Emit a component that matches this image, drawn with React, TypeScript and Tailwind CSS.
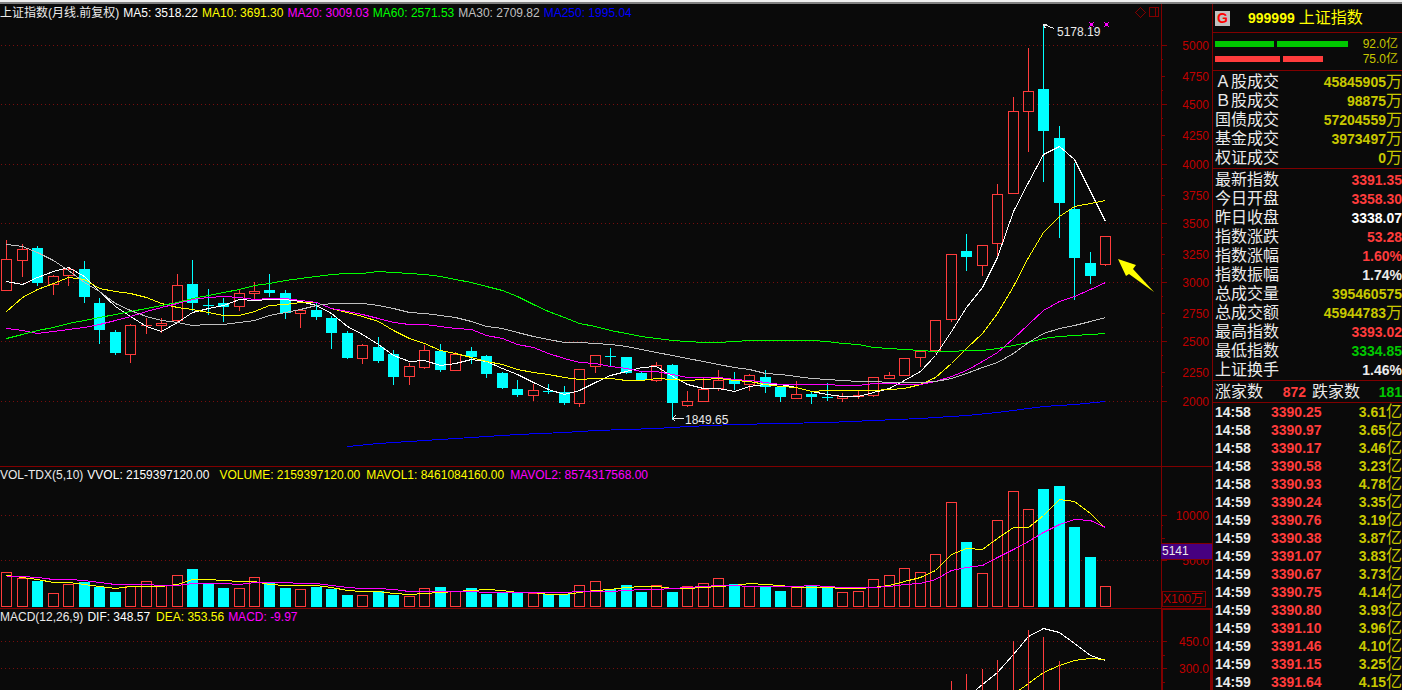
import { ReactNode } from "react";

// r = rising month (hollow), c = falling month (filled)
type TCandle = ["r" | "c", number, number, number, number, number];

// direction, high, body top, body bottom, low, volume top
const Candles: TCandle[] = [
  ["r", 240, 259, 290, 290, 572],
  ["r", 244, 249, 260, 276, 578],
  ["c", 246, 248, 282, 285, 581],
  ["r", 275, 276, 284, 294, 593],
  ["r", 267, 269, 275, 285, 584],
  ["c", 261, 269, 296, 302, 582],
  ["c", 298, 303, 329, 343, 587],
  ["c", 330, 332, 352, 354, 592],
  ["r", 324, 325, 354, 362, 586],
  ["r", 318, 325, 325, 333, 581],
  ["r", 318, 323, 325, 332, 585],
  ["r", 274, 285, 320, 321, 575],
  ["c", 260, 284, 302, 310, 569],
  ["c", 289, 305, 305, 314, 584],
  ["c", 298, 303, 306, 321, 588],
  ["r", 289, 293, 306, 310, 588],
  ["r", 282, 291, 293, 299, 577],
  ["c", 274, 290, 292, 296, 583],
  ["c", 290, 293, 312, 318, 588],
  ["r", 310, 310, 313, 327, 589],
  ["c", 303, 310, 316, 319, 587],
  ["c", 316, 318, 332, 348, 589],
  ["c", 331, 333, 357, 358, 595],
  ["r", 344, 345, 358, 363, 595],
  ["c", 337, 347, 360, 362, 591],
  ["c", 350, 354, 376, 384, 595],
  ["r", 363, 366, 376, 384, 596],
  ["r", 345, 350, 367, 368, 588],
  ["c", 344, 351, 369, 371, 587],
  ["r", 352, 354, 370, 370, 591],
  ["c", 347, 351, 356, 363, 588],
  ["c", 355, 356, 373, 377, 594],
  ["c", 372, 373, 387, 388, 593],
  ["c", 380, 389, 394, 396, 593],
  ["r", 384, 390, 395, 400, 593],
  ["c", 384, 391, 391, 393, 594],
  ["c", 386, 392, 402, 404, 594],
  ["r", 369, 369, 403, 406, 585],
  ["r", 355, 355, 366, 372, 581],
  ["c", 348, 356, 356, 365, 589],
  ["c", 357, 357, 372, 373, 585],
  ["c", 371, 373, 379, 379, 592],
  ["r", 362, 365, 380, 381, 585],
  ["c", 364, 365, 402, 419, 592],
  ["r", 391, 401, 405, 406, 586],
  ["r", 377, 389, 401, 401, 583],
  ["r", 370, 380, 388, 390, 578],
  ["c", 372, 380, 383, 389, 584],
  ["r", 374, 375, 384, 390, 586],
  ["c", 370, 377, 386, 392, 586],
  ["c", 386, 387, 396, 401, 591],
  ["r", 381, 394, 398, 398, 586],
  ["c", 391, 394, 396, 403, 585],
  ["c", 383, 397, 397, 400, 587],
  ["r", 393, 396, 398, 401, 592],
  ["r", 391, 395, 396, 398, 591],
  ["r", 377, 377, 395, 396, 579],
  ["r", 372, 375, 378, 378, 575],
  ["r", 358, 358, 375, 375, 568],
  ["r", 350, 351, 357, 366, 572],
  ["r", 320, 320, 350, 352, 554],
  ["r", 254, 254, 319, 321, 502],
  ["c", 234, 251, 256, 270, 542],
  ["r", 245, 245, 265, 275, 573],
  ["r", 184, 194, 243, 258, 520],
  ["r", 97, 111, 193, 193, 491],
  ["r", 48, 91, 111, 151, 509],
  ["c", 24, 89, 130, 181, 489],
  ["c", 126, 138, 202, 237, 486],
  ["c", 163, 209, 257, 299, 527],
  ["c", 252, 263, 275, 283, 557],
  ["r", 236, 236, 264, 265, 586],
];

const MA5 = [
  281, 284, 277, 271, 267, 276, 291, 306, 316, 326, 331, 322, 312, 308, 305, 299, 300, 299, 299, 301, 305, 313, 326, 334,
  344, 355, 361, 360, 365, 363, 359, 361, 368, 374, 382, 389, 394, 390, 382, 375, 371, 367, 366, 376, 384, 388, 388, 391,
  386, 384, 384, 387, 391, 394, 396, 396, 392, 388, 380, 371, 355, 331, 307, 287, 257, 211, 182, 154, 146, 159, 191, 221,
];

const MA10 = [
  311, 297, 289, 283, 277, 279, 288, 291, 293, 297, 303, 307, 309, 312, 315, 315, 311, 305, 304, 302, 302, 308, 312, 316,
  321, 330, 338, 343, 350, 353, 357, 361, 364, 369, 372, 374, 377, 379, 378, 378, 380, 380, 378, 379, 380, 379, 378, 380,
  381, 384, 386, 387, 391, 390, 390, 390, 390, 389, 388, 384, 377, 363, 348, 333, 313, 286, 257, 232, 216, 206, 203, 200,
];

const MA20 = [
  328, 330, 333, 331, 329, 327, 324, 320, 316, 311, 307, 303, 299, 297, 296, 297, 299, 298, 298, 300, 302, 308, 311, 314,
  318, 322, 324, 324, 326, 328, 329, 335, 338, 344, 347, 353, 358, 362, 363, 366, 368, 371, 371, 374, 377, 377, 377, 379,
  380, 382, 384, 384, 384, 384, 385, 385, 383, 383, 384, 384, 381, 376, 370, 361, 352, 338, 324, 310, 301, 296, 289, 282,
];

const MA30 = [
  244, 246, 252, 260, 270, 282, 291, 303, 310, 316, 320, 322, 325, 324, 324, 322, 320, 315, 312, 309, 305, 303, 303, 303,
  305, 308, 312, 313, 315, 317, 321, 326, 328, 332, 336, 339, 342, 342, 343, 344, 346, 349, 352, 355, 358, 361, 364, 367,
  369, 373, 374, 376, 378, 379, 380, 381, 381, 382, 382, 382, 381, 378, 373, 367, 362, 353, 342, 333, 328, 325, 321, 317,
];

const MA60 = [
  338, 334, 330, 327, 323, 320, 317, 314, 311, 308, 305, 302, 298, 295, 292, 289, 285, 283, 280, 278, 276, 274, 273, 273,
  271, 272, 273, 274, 276, 279, 282, 286, 290, 296, 304, 311, 317, 323, 326, 330, 333, 336, 338, 340, 341, 342, 342, 341,
  340, 340, 340, 340, 340, 341, 343, 344, 347, 348, 349, 350, 351, 351, 350, 350, 348, 345, 342, 338, 336, 335, 334, 333,
];

const MA250 =
  "347.5,446.5 378.5,443.5 424.5,440.5 471.5,437.5 517.5,434.5 564.5,432.5 595.5,430.5 656.5,428.5 687.5,426.5 734.5,424.5 780.5,423.5 827.5,422.5 873.5,420.5 920.5,418.5 966.5,415.5 997.5,412.5 1043.5,406.5 1074.5,404.5 1105.5,401.5";

const MAVOL1 = [
  575, 577, 579, 582, 582, 584, 586, 588, 586, 586, 586, 584, 579, 579, 580, 581, 581, 584, 585, 585, 585, 587, 590, 591,
  591, 593, 594, 593, 592, 591, 590, 589, 590, 592, 592, 594, 594, 592, 590, 589, 587, 586, 586, 588, 588, 587, 586, 585,
  583, 584, 585, 587, 587, 587, 588, 588, 587, 585, 581, 577, 570, 554, 548, 549, 538, 527, 527, 515, 499, 501, 513, 528,
];

const MAVOL2 = [
  576, 576, 577, 579, 579, 580, 582, 584, 584, 584, 585, 585, 583, 583, 583, 584, 582, 582, 582, 583, 583, 585, 587, 588,
  588, 589, 591, 591, 591, 591, 591, 592, 592, 592, 592, 592, 592, 591, 591, 591, 590, 589, 589, 588, 587, 586, 585, 585,
  586, 586, 586, 586, 585, 586, 587, 587, 587, 586, 584, 583, 579, 570, 567, 565, 557, 549, 541, 532, 524, 519, 520, 527,
];

const MacdBars = [681, 674, 669, 660, 641, 630, 637, 661];

const PriceLabels = [
  { text: "5000", y: 45 },
  { text: "4750", y: 76 },
  { text: "4500", y: 104 },
  { text: "4250", y: 135 },
  { text: "4000", y: 164 },
  { text: "3750", y: 195 },
  { text: "3500", y: 223 },
  { text: "3250", y: 254 },
  { text: "3000", y: 282 },
  { text: "2750", y: 313 },
  { text: "2500", y: 341 },
  { text: "2250", y: 372 },
  { text: "2000", y: 401 },
];

type TStat = { label: string; value: string; color: string };

const Turnover: TStat[] = [
  { label: "Ａ股成交", value: "45845905万", color: "text-[#c8c800]" },
  { label: "Ｂ股成交", value: "98875万", color: "text-[#c8c800]" },
  { label: "国债成交", value: "57204559万", color: "text-[#c8c800]" },
  { label: "基金成交", value: "3973497万", color: "text-[#c8c800]" },
  { label: "权证成交", value: "0万", color: "text-[#c8c800]" },
];

const IndexStats: TStat[] = [
  { label: "最新指数", value: "3391.35", color: "text-[#ff3c3c]" },
  { label: "今日开盘", value: "3358.30", color: "text-[#ff3c3c]" },
  { label: "昨日收盘", value: "3338.07", color: "text-white" },
  { label: "指数涨跌", value: "53.28", color: "text-[#ff3c3c]" },
  { label: "指数涨幅", value: "1.60%", color: "text-[#ff3c3c]" },
  { label: "指数振幅", value: "1.74%", color: "text-[#ebebeb]" },
  { label: "总成交量", value: "395460575", color: "text-[#c8c800]" },
  { label: "总成交额", value: "45944783万", color: "text-[#c8c800]" },
  { label: "最高指数", value: "3393.02", color: "text-[#ff3c3c]" },
  { label: "最低指数", value: "3334.85", color: "text-[#00c800]" },
  { label: "上证换手", value: "1.46%", color: "text-[#ebebeb]" },
];

const Ticks = [
  ["14:58", "3390.25", "3.61"],
  ["14:58", "3390.97", "3.65"],
  ["14:58", "3390.17", "3.46"],
  ["14:58", "3390.58", "3.23"],
  ["14:58", "3390.93", "4.78"],
  ["14:59", "3390.24", "3.35"],
  ["14:59", "3390.76", "3.19"],
  ["14:59", "3390.38", "3.87"],
  ["14:59", "3391.07", "3.83"],
  ["14:59", "3390.67", "3.73"],
  ["14:59", "3390.75", "4.14"],
  ["14:59", "3390.80", "3.93"],
  ["14:59", "3391.10", "3.96"],
  ["14:59", "3391.46", "4.10"],
  ["14:59", "3391.15", "3.25"],
  ["14:59", "3391.64", "4.15"],
];

const xAt = (i: number) => 6 + Math.floor(i * 15.48 + 0.8);

const Series = ({ values, color, from = 0 }: { values: number[]; color: string; from?: number }) => (
  <polyline points={values.map((y, i) => `${xAt(i + from) + 0.5},${y + 0.5}`).join(" ")} fill="none" stroke={color} />
);

const GridLine = ({ y }: { y: number }) => (
  <path d={`M1 ${y + 0.5}H1160`} stroke="#780e0e" strokeDasharray="1 3" />
);

const AxisTick = ({ y, size }: { y: number; size: number }) => (
  <path d={`M1162 ${y + 0.5}h${size}`} stroke="#800000" />
);

const AxisLabel = ({ y, children }: { y: number; children: ReactNode }) => (
  <text x="1209" y={y + 5} textAnchor="end" fill="#c00000">
    {children}
  </text>
);

const Box = ({ x, top, bottom, up }: { x: number; top: number; bottom: number; up: boolean }) => {
  if (top === bottom) {
    return <path d={`M${x - 5} ${top + 0.5}h11`} stroke={up ? "#ff3c3c" : "#00ffff"} />;
  }
  return up ? (
    <rect x={x - 4.5} y={top + 0.5} width="10" height={bottom - top} fill="none" stroke="#ff3c3c" />
  ) : (
    <rect x={x - 5} y={top} width="11" height={bottom - top + 1} fill="#00ffff" />
  );
};

const Panel = ({ viewBox, title, header, children }: { viewBox: string; title: string; header: ReactNode; children: ReactNode }) => (
  <section className="relative">
    <svg viewBox={viewBox} role="img" aria-label={title} className="block w-full text-xs" shapeRendering="crispEdges">
      {children}
    </svg>
    <div className="absolute top-0 left-0 flex h-[18px] items-center gap-1 text-xs whitespace-nowrap text-[#ebebeb]">
      {header}
    </div>
  </section>
);

function PriceChart() {
  return (
    <Panel
      viewBox="0 4 1212 462"
      title="上证指数"
      header={
        <>
          <h1>上证指数(月线.前复权)</h1>
          <span className="text-white">MA5: 3518.22</span>
          <span className="text-[#ffff00]">MA10: 3691.30</span>
          <span className="text-[#ff00ff]">MA20: 3009.03</span>
          <span className="text-[#00ff00]">MA60: 2571.53</span>
          <span className="text-[#c0c0c0]">MA30: 2709.82</span>
          <span className="text-[#0000ff]">MA250: 1995.04</span>
        </>
      }
    >
      {[45, 104, 164, 223, 282, 341, 401].map((y) => (
        <GridLine key={y} y={y} />
      ))}
      <path d="M1161.5 4V466" stroke="#800000" />
      {PriceLabels.map((item, i) => (
        <g key={item.text}>
          <AxisTick y={item.y} size={i % 2 === 0 ? 5 : 3} />
          {i < PriceLabels.length - 1 && <AxisTick y={item.y + 14} size={1} />}
          <AxisLabel y={item.y}>{item.text}</AxisLabel>
        </g>
      ))}

      {Candles.map(([dir, high, top, bottom, low], i) => {
        const x = xAt(i);
        const up = dir === "r";
        return (
          <g key={i}>
            <path
              d={`M${x + 0.5} ${high}V${top}M${x + 0.5} ${bottom}V${low + 1}`}
              stroke={up ? "#ff3c3c" : "#00ffff"}
            />
            <Box x={x} top={top} bottom={bottom} up={up} />
          </g>
        );
      })}

      <Series values={MA5} color="#ffffff" />
      <Series values={MA10} color="#ffff00" />
      <Series values={MA20} color="#ff00ff" />
      <Series values={MA60} color="#00ff00" />
      <Series values={MA30} color="#c0c0c0" />
      <polyline points={MA250} fill="none" stroke="#0000ff" />

      {/* highest and lowest price */}
      <path d="M1043.5 24.5l11 4M1043.5 24.5h3M1043.5 24.5l2 4" fill="none" stroke="#ebebeb" />
      <text x="1057" y="36" fill="#ebebeb">
        5178.19
      </text>
      <path d="M672.5 418.5h11M675.5 415.5l-3 3l3 3" fill="none" stroke="#ebebeb" />
      <text x="685" y="424" fill="#ebebeb">
        1849.65
      </text>

      <path d="M1089 22l5 5M1094 22l-5 5M1104 22l5 5M1109 22l-5 5" stroke="#ff00ff" />
      <path d="M1090 23h3v3h-3zM1105 23h3v3h-3z" fill="#ff00ff" />
      <path d="M1140.5 7.5l5 5l-5 5l-5 -5z" fill="none" stroke="#800000" />
      <path d="M1149.5 7.5h9v9h-9zM1155.5 7.5v9" fill="none" stroke="#800000" />

      <path
        d="M1118 259L1136 265L1133 269L1154 292L1147 287L1129 274L1126 276Z"
        fill="#ffff00"
        shapeRendering="geometricPrecision"
      />
    </Panel>
  );
}

function VolumeChart() {
  return (
    <Panel
      viewBox="0 466 1212 142"
      title="VOL-TDX"
      header={
        <>
          <h2>VOL-TDX(5,10)</h2>
          <span className="mr-1.5 text-white">VVOL: 2159397120.00</span>
          <span className="mr-0.5 text-[#ffff00]">VOLUME: 2159397120.00</span>
          <span className="mr-0.5 text-[#ffff00]">MAVOL1: 8461084160.00</span>
          <span className="text-[#ff00ff]">MAVOL2: 8574317568.00</span>
        </>
      }
    >
      <GridLine y={515} />
      <GridLine y={560} />
      <path d="M0 466.5H1212M1161.5 466V608" stroke="#800000" />
      <AxisTick y={515} size={5} />
      <AxisTick y={525} size={1} />
      <AxisTick y={538} size={3} />
      <AxisTick y={560} size={5} />
      <AxisLabel y={515}>10000</AxisLabel>
      <AxisLabel y={560}>5000</AxisLabel>

      {Candles.map((candle, i) => (
        <Box key={i} x={xAt(i)} top={candle[5]} bottom={606} up={candle[0] === "r"} />
      ))}
      <Series values={MAVOL1} color="#ffff00" />
      <Series values={MAVOL2} color="#ff00ff" />

      <rect x="1161" y="543" width="51" height="16" fill="#460080" />
      <path d="M1161 543.5H1212M1161 559.5H1212" stroke="#800000" />
      <text x="1162" y="555" fill="#ebebeb">
        5141
      </text>
      <rect x="1162.5" y="591.5" width="43" height="15" fill="none" stroke="#800000" />
      <text x="1163" y="603" fill="#c00000">
        X100万
      </text>
    </Panel>
  );
}

function MacdChart() {
  return (
    <Panel
      viewBox="0 608 1212 82"
      title="MACD"
      header={
        <>
          <h2>MACD(12,26,9)</h2>
          <span className="mr-0.5 text-white">DIF: 348.57</span>
          <span className="text-[#ffff00]">DEA: 353.56</span>
          <span className="text-[#ff00ff]">MACD: -9.97</span>
        </>
      }
    >
      <GridLine y={641} />
      <GridLine y={668} />
      <path d="M0 608.5H1212" stroke="#800000" />
      <path d="M1162 690V609H1211V690" fill="none" stroke="#800000" strokeWidth="2" />
      <AxisTick y={641} size={5} />
      <AxisTick y={655} size={3} />
      <AxisTick y={668} size={5} />
      <AxisTick y={682} size={3} />
      <AxisLabel y={641}>450.0</AxisLabel>
      <AxisLabel y={668}>300.0</AxisLabel>

      <Series values={[697, 684, 672, 654, 636, 628, 632, 643, 655, 660]} from={62} color="#ffffff" />
      <Series values={[694, 683, 672, 665, 660, 658, 659]} from={65} color="#ffff00" />
      {MacdBars.map((y, i) => (
        <path key={i} d={`M${xAt(61 + i) + 0.5} ${y}V690`} stroke="#ff3c3c" />
      ))}
    </Panel>
  );
}

// numbers are bold, the CJK unit after them keeps the regular weight
const Value = ({ children }: { children: string }) => {
  const unit = /[万亿]$/.test(children) ? children.slice(-1) : "";
  return (
    <>
      <b>{unit ? children.slice(0, -1) : children}</b>
      {unit && <span className="text-base leading-none">{unit}</span>}
    </>
  );
};

const StatTable = ({ rows }: { rows: TStat[] }) => (
  <div className="-ml-0.5 border-b border-[#800000] pt-px pb-px pl-0.5">
    <table className="w-full text-sm leading-none">
      <tbody>
        {rows.map((row) => (
          <tr key={row.label} className="h-[19px]">
            <th scope="row" className="p-0 text-left align-middle text-base leading-none font-normal text-[#ebebeb]">
              {row.label}
            </th>
            <td className={`p-0 text-right align-middle ${row.color}`}>
              <Value>{row.value}</Value>
            </td>
          </tr>
        ))}
      </tbody>
    </table>
  </div>
);

function QuotePanel() {
  return (
    <aside className="w-[190px] shrink-0 overflow-hidden border-l border-[#800000] pl-0.5 whitespace-nowrap">
      <div className="-ml-0.5 flex h-[29px] items-center border-b border-[#800000] pl-0.5 text-[#ffff00]">
        <span className="flex h-[15px] w-[15px] items-center justify-center bg-[#c0c0c0] text-sm leading-none font-bold text-[#ff0000]">
          G
        </span>
        <b className="ml-[18px] text-sm">999999</b>
        <h2 className="ml-1 text-base leading-none">上证指数</h2>
      </div>

      <div className="-ml-0.5 border-b border-[#800000] pt-[3px] pr-1 pb-1 pl-0.5 text-xs text-[#c8c800]">
        <div className="flex h-[15px] items-center gap-[3px]">
          <div className="h-1.5 w-[59px] bg-[#00c800]" />
          <div className="h-1.5 w-[71px] bg-[#00c800]" />
          <span className="ml-auto leading-none">92.0亿</span>
        </div>
        <div className="flex h-[15px] items-center gap-[3px]">
          <div className="h-1.5 w-[65px] bg-[#ff3c3c]" />
          <div className="h-1.5 w-10 bg-[#ff3c3c]" />
          <span className="ml-auto leading-none">75.0亿</span>
        </div>
      </div>

      <StatTable rows={Turnover} />
      <StatTable rows={IndexStats} />

      <div className="-ml-0.5 flex h-[22px] items-center border-b border-[#800000] pl-0.5 text-base leading-none text-[#ebebeb]">
        <span>涨家数</span>
        <b className="w-[43px] text-right text-sm text-[#ff3c3c]">872</b>
        <span className="ml-1.5">跌家数</span>
        <b className="ml-auto text-sm text-[#00c800]">181</b>
      </div>

      <table className="w-full text-sm leading-none">
        <tbody>
          {Ticks.map(([time, price, amount], i) => (
            <tr key={i} className="h-[18px]">
              <td className="w-14 p-0 font-bold text-[#ebebeb]">{time}</td>
              <td className="p-0 font-bold text-[#ff3c3c]">{price}</td>
              <td className="p-0 text-right text-[#c8c800]">
                <Value>{`${amount}亿`}</Value>
              </td>
            </tr>
          ))}
        </tbody>
      </table>
    </aside>
  );
}

function App() {
  return (
    <div className="flex h-screen flex-col overflow-hidden bg-[#0a0a0a] font-['Liberation_Sans','Noto_Sans_CJK_SC',sans-serif]">
      <div className="h-1 shrink-0 border-b-2 border-[#808080] bg-[#f0f0f0]" />
      <div className="flex min-h-0 flex-1">
        <main className="min-w-0 flex-1">
          <PriceChart />
          <VolumeChart />
          <MacdChart />
        </main>
        <QuotePanel />
      </div>
    </div>
  );
}

export default App;
